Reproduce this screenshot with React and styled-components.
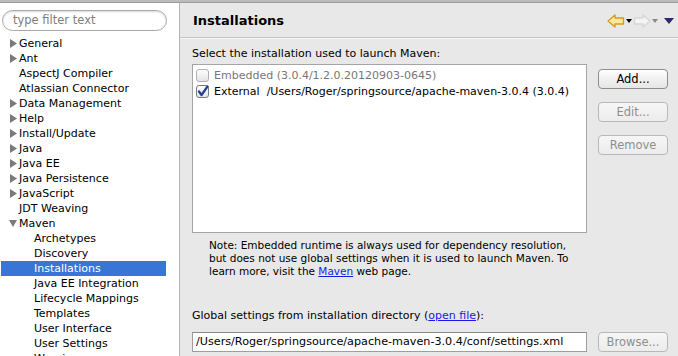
import React from "react";
import styled, { createGlobalStyle } from "styled-components";

const Global = createGlobalStyle`
  html, body { margin: 0; padding: 0; }
  body { width: 678px; height: 356px; overflow: hidden; background: #e8e8e8;
    font-family: "DejaVu Sans", "Liberation Sans", sans-serif; font-size: 11px; color: #000; }
`;

const Frame = styled.div`
  width: 678px; height: 356px; display: flex; flex-direction: column; overflow: hidden;
`;
const TopStrip = styled.div`
  height: 2px; background: #bcbcbc; border-bottom: 1px solid #9c9c9c; flex: none;
`;
const Body = styled.div`
  flex: 1; display: flex; min-height: 0;
`;
const Sidebar = styled.div`
  width: 179px; flex: none; background: #fff; border-right: 1px solid #b4b4b4;
  display: flex; flex-direction: column; overflow: hidden;
`;
const FilterWrap = styled.div`
  padding: 7px 12px 0 2px; height: 32px; box-sizing: border-box;
`;
const Filter = styled.div`
  height: 21px; border: 1px solid #a9a9a9; border-radius: 11px; box-sizing: border-box;
  box-shadow: inset 0 1px 2px rgba(0,0,0,0.15);
  color: #7e7e7e; font-size: 11.5px; line-height: 19px; padding-left: 10px;
`;
const Tree = styled.div`
  display: flex; flex-direction: column; padding-top: 5px;
`;
const Row = styled.div`
  height: 15px; line-height: 15px; display: flex; align-items: center; flex: none;
  padding-left: ${p => p.$indent}px; margin: 0 13px 0 1px; white-space: nowrap;
  background: ${p => p.$sel ? "#3875d7" : "transparent"};
  color: ${p => p.$sel ? "#fff" : "#000"};
`;
const Twisty = styled.span`
  width: 10px; height: 15px; display: inline-flex; align-items: center; justify-content: center;
  margin-right: 1px;
`;

const Main = styled.div`
  flex: 1; display: flex; flex-direction: column; min-width: 0;
`;
const Header = styled.div`
  height: 34px; flex: none; display: flex; align-items: center; justify-content: space-between;
  padding: 0 3px 0 13px; border-bottom: 1px solid #c4c4c4; box-shadow: 0 1px 0 #f6f6f6;
`;
const Title = styled.div`
  font-weight: bold; font-size: 13px;
`;
const Nav = styled.div`
  display: flex; align-items: center; padding-top: 2px;
`;
const NavGap = styled.span`
  width: 4px;
`;
const Content = styled.div`
  flex: 1; display: flex; flex-direction: column; padding: 8px 9px 0 12px;
`;
const Label = styled.div`
  height: 15px; line-height: 15px; white-space: nowrap;
`;
const Split = styled.div`
  display: flex; gap: 11px; margin-top: 3px;
`;
const ListBox = styled.div`
  width: 395px; height: 169px; box-sizing: border-box; background: #fff;
  border: 1px solid #a5a5a5; padding: 2px 0 0 3px; flex: none;
`;
const Item = styled.div`
  height: 16px; display: flex; align-items: center; gap: 5px; white-space: nowrap;
  color: ${p => p.$dim ? "#777" : "#000"};
`;
const Buttons = styled.div`
  display: flex; flex-direction: column; gap: 13px; padding-top: 5px;
`;
const Button = styled.div`
  width: 70px; height: 20px; box-sizing: border-box; border-radius: 4px;
  border: 1px solid ${p => p.$disabled ? "#b8b8b8" : "#8d8d8d"};
  background: ${p => p.$disabled ? "linear-gradient(#f6f6f6, #ececec)" : "linear-gradient(#ffffff, #f1f1f1 50%, #e6e6e6)"};
  color: ${p => p.$disabled ? "#8e8e8e" : "#000"};
  display: flex; align-items: center; justify-content: center; font-size: 11.5px;
`;
const Note = styled.div`
  margin: 6px 0 0 17px; line-height: 13px; width: 372px; font-size: 10.5px;
`;
const Link = styled.span`
  color: #1a1ae6; text-decoration: underline;
`;
const Spacer = styled.div` flex: 1; `;
const Bottom = styled.div`
  display: flex; gap: 11px; align-items: center; margin-top: 9px; margin-bottom: 4px;
`;
const Input = styled.div`
  width: 395px; height: 20px; box-sizing: border-box; border: 1px solid #9e9e9e;
  border-top-color: #8a8a8a; background: #fff; line-height: 18px; padding-left: 3px; white-space: nowrap;
  font-size: 11.2px;
`;

const Tri = ({ open }) => (
  <svg width="8" height="9" viewBox="0 0 8 9">
    {open ? <polygon points="0,1 8,1 4,8" fill="#7a7a7a" /> : <polygon points="1,0 8,4.5 1,9" fill="#7a7a7a" />}
  </svg>
);

const Check = ({ checked }) => (
  <svg width="13" height="13" viewBox="0 0 13 13">
    <defs>
      <linearGradient id={checked ? "cg1" : "cg0"} x1="0" y1="0" x2="0" y2="1">
        <stop offset="0" stopColor="#ffffff" />
        <stop offset="1" stopColor="#e3e3e3" />
      </linearGradient>
    </defs>
    <rect x="0.5" y="0.5" width="12" height="12" rx="2.5" fill={`url(#${checked ? "cg1" : "cg0"})`}
      stroke={checked ? "#7b7b7b" : "#b0b0b0"} />
    {checked && <path d="M3 6.5 L5.5 10 L11.5 1.5" fill="none" stroke="#1f3f8f" strokeWidth="2.2" strokeLinejoin="round" strokeLinecap="round" />}
  </svg>
);

const Arrow = ({ dir, active }) => (
  <svg width="18" height="14" viewBox="0 0 18 14">
    {dir === "left" ? (
      <polygon points="1,7 8,1 8,4 16.5,4 16.5,10 8,10 8,13"
        fill={active ? "#fbe7a0" : "#f4f4f4"} stroke={active ? "#d59a1c" : "#d6d6d6"} strokeWidth="1.3" strokeLinejoin="round" />
    ) : (
      <polygon points="17,7 10,1 10,4 1.5,4 1.5,10 10,10 10,13"
        fill={active ? "#fbe7a0" : "#f4f4f4"} stroke={active ? "#d59a1c" : "#d6d6d6"} strokeWidth="1.3" strokeLinejoin="round" />
    )}
  </svg>
);
const Drop = ({ color, w = 6, h = 4 }) => (
  <svg width={w + 2} height={h + 2} viewBox={`0 0 ${w + 2} ${h + 2}`}>
    <polygon points={`1,1 ${w + 1},1 ${w / 2 + 1},${h + 1}`} fill={color} />
  </svg>
);

const tree = [
  { t: "General", tw: "c" }, { t: "Ant", tw: "c" }, { t: "AspectJ Compiler" }, { t: "Atlassian Connector" },
  { t: "Data Management", tw: "c" }, { t: "Help", tw: "c" }, { t: "Install/Update", tw: "c" },
  { t: "Java", tw: "c" }, { t: "Java EE", tw: "c" }, { t: "Java Persistence", tw: "c" },
  { t: "JavaScript", tw: "c" }, { t: "JDT Weaving" }, { t: "Maven", tw: "o" },
  { t: "Archetypes", c: 1 }, { t: "Discovery", c: 1 }, { t: "Installations", c: 1, sel: 1 },
  { t: "Java EE Integration", c: 1 }, { t: "Lifecycle Mappings", c: 1 }, { t: "Templates", c: 1 },
  { t: "User Interface", c: 1 }, { t: "User Settings", c: 1 }, { t: "Warnings", c: 1 },
];

export default function App() {
  return (
    <Frame>
      <Global />
      <TopStrip />
      <Body>
        <Sidebar>
          <FilterWrap><Filter>type filter text</Filter></FilterWrap>
          <Tree>
            {tree.map((r) => (
              <Row key={r.t} $indent={r.c ? 33 : 7} $sel={r.sel}>
                {!r.c && <Twisty>{r.tw && <Tri open={r.tw === "o"} />}</Twisty>}
                {r.t}
              </Row>
            ))}
          </Tree>
        </Sidebar>
        <Main>
          <Header>
            <Title>Installations</Title>
            <Nav>
              <Arrow dir="left" active />
              <Drop color="#000" />
              <Arrow dir="right" />
              <Drop color="#8a8a8a" />
              <NavGap />
              <Drop color="#2c2a6e" w={10} h={6} />
            </Nav>
          </Header>
          <Content>
            <Label>Select the installation used to launch Maven:</Label>
            <Split>
              <ListBox>
                <Item $dim><Check /> Embedded (3.0.4/1.2.0.20120903-0645)</Item>
                <Item><Check checked /> External&nbsp; /Users/Roger/springsource/apache-maven-3.0.4 (3.0.4)</Item>
              </ListBox>
              <Buttons>
                <Button>Add...</Button>
                <Button $disabled>Edit...</Button>
                <Button $disabled>Remove</Button>
              </Buttons>
            </Split>
            <Note>
              Note: Embedded runtime is always used for dependency resolution, but does not use global settings when it is used to launch Maven. To learn more, visit the <Link>Maven</Link> web page.
            </Note>
            <Spacer />
            <Label>Global settings from installation directory (<Link>open file</Link>):</Label>
            <Bottom>
              <Input>/Users/Roger/springsource/apache-maven-3.0.4/conf/settings.xml</Input>
              <Button $disabled>Browse...</Button>
            </Bottom>
          </Content>
        </Main>
      </Body>
    </Frame>
  );
}
